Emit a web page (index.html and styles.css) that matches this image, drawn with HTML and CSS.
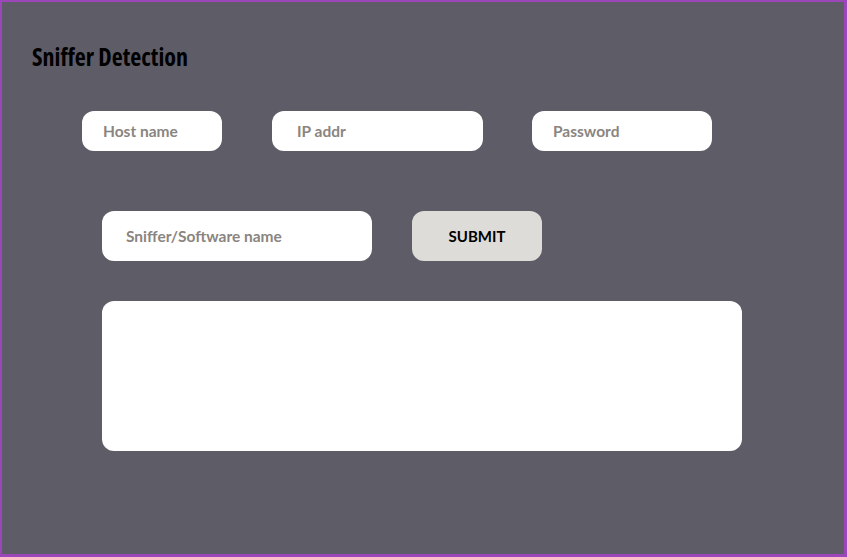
FILE: index.html
```html
<!DOCTYPE html>
<html>
  <head>
    <title>Sniffer Detection</title>
    <meta charset="utf-8" />
    <link rel="stylesheet" href="styles.css">
  </head>
  <body>
    <div class="frame">
      <h1 class="title">Sniffer Detection</h1>
      <div class="row creds">
        <input class="field host" type="text" placeholder="Host name">
        <input class="field ip" type="text" placeholder="IP addr">
        <input class="field pass" type="password" placeholder="Password">
      </div>
      <div class="row search">
        <input class="field name" type="text" placeholder="Sniffer/Software name">
        <button class="submit">SUBMIT</button>
      </div>
      <textarea class="output"></textarea>
    </div>
  </body>
</html>
```

FILE: styles.css
```css
html,
body {
  margin: 0;
  padding: 0;
  height: 100%;
}
body {
  font-family: "Open Sans", sans-serif;
}
.frame {
  box-sizing: border-box;
  height: 557px;
  border: solid #9b46b9;
  border-width: 2px 3px 3px 2px;
  background: #5e5c67;
  padding: 0 0 0 30px;
}
.title {
  margin: 0;
  padding-top: 40px;
  font-size: 24px;
  font-weight: bold;
  font-stretch: 75%;
  color: #000;
  line-height: 30px;
}
.row {
  display: flex;
  align-items: center;
}
.creds {
  margin: 39px 0 0 50px;
  gap: 50px;
}
.search {
  margin: 60px 0 0 70px;
  gap: 40px;
}
.field {
  box-sizing: border-box;
  border: 0;
  outline: none;
  border-radius: 12px;
  background: #fff;
  padding: 0 21px;
  font: bold 15.5px Lato, sans-serif;
  color: #333;
}
.field::placeholder {
  color: #8a8580;
}
.creds .field {
  height: 40px;
}
.host {
  width: 140px;
}
.ip {
  width: 211px;
  padding-left: 25px;
}
.pass {
  width: 180px;
}
.creds .pass {
  margin-left: -1px;
}
.name {
  width: 270px;
  height: 50px;
  padding-left: 24px;
}
.submit {
  width: 130px;
  height: 50px;
  border: 0;
  border-radius: 12px;
  background: #dedcd9;
  font: bold 15px Lato, sans-serif;
  color: #000;
  cursor: pointer;
}
.output {
  display: block;
  box-sizing: border-box;
  width: 640px;
  height: 150px;
  margin: 40px 0 0 70px;
  border: 0;
  border-radius: 12px;
  background: #fff;
  resize: none;
  outline: none;
}
```
